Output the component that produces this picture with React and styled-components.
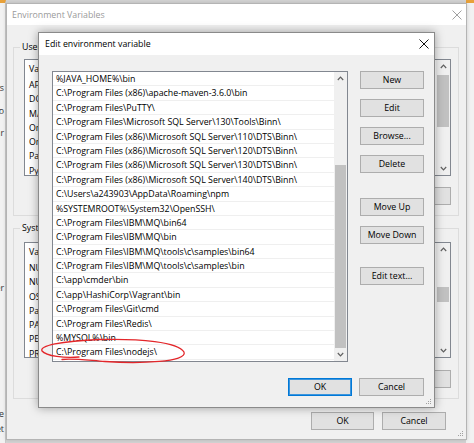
import React from 'react';
import styled, { createGlobalStyle } from 'styled-components';

const GlobalStyle = createGlobalStyle`
  html, body { margin: 0; padding: 0; }
  body {
    background: #d4d4d4;
    font-family: "Open Sans", "Noto Sans", sans-serif;
    font-size: 8.8px;
    color: #000;
  }
  * { box-sizing: border-box; }
`;

const Desktop = styled.div`
  position: relative;
  width: 474px;
  height: 443px;
  overflow: hidden;
  background: #d4d4d4;
`;

// windows sitting behind, only their edges show
const BackWindow = styled.div`
  position: absolute;
  top: 0;
  left: ${p => p.$x}px;
  width: ${p => p.$w}px;
  height: 443px;
  display: flex;
  flex-direction: column;
  align-items: flex-end;
  background: #f2f2f2;
  border-top: 3px solid #e8a13a;
  border-right: 1px solid #c9c9c9;
  color: #333;
`;

const BackLine = styled.div`
  margin-top: ${p => p.$mt}px;
  line-height: 14px;
  white-space: nowrap;
  padding-right: 1px;
`;

const Window = styled.div`
  position: absolute;
  left: ${p => p.$x}px;
  top: ${p => p.$y}px;
  width: ${p => p.$w}px;
  height: ${p => p.$h}px;
  display: flex;
  flex-direction: column;
  background: #f0f0f0;
  border: 1px solid ${p => (p.$active ? '#8a8a8a' : '#b4b4b4')};
  box-shadow: ${p => (p.$active ? '0 0 9px rgba(0,0,0,0.35)' : '0 0 4px rgba(0,0,0,0.15)')};
`;

const TitleBar = styled.div`
  flex: none;
  height: ${p => p.$h}px;
  display: flex;
  align-items: center;
  justify-content: space-between;
  padding: 0 ${p => p.$pr}px 0 ${p => p.$pl}px;
  background: #fff;
  color: ${p => (p.$active ? '#000' : '#9a9a9a')};
`;

const CloseIcon = ({ color }) => (
  <svg width="10" height="10" viewBox="0 0 10 10">
    <path d="M0.5 0.5 L9.5 9.5 M9.5 0.5 L0.5 9.5" stroke={color} strokeWidth="1" fill="none" />
  </svg>
);

const Grip = styled.svg`
  position: absolute;
  right: 2px;
  bottom: 2px;
`;

const SizeGrip = () => (
  <Grip width="6" height="6" viewBox="0 0 6 6">
    <rect x="4" y="0" width="1" height="1" fill="#a0a0a0" />
    <rect x="2" y="2" width="1" height="1" fill="#a0a0a0" />
    <rect x="4" y="2" width="1" height="1" fill="#a0a0a0" />
    <rect x="0" y="4" width="1" height="1" fill="#a0a0a0" />
    <rect x="2" y="4" width="1" height="1" fill="#a0a0a0" />
    <rect x="4" y="4" width="1" height="1" fill="#a0a0a0" />
  </Grip>
);

/* ---------- outer "Environment Variables" window ---------- */

const OuterBody = styled.div`
  flex: 1;
  display: flex;
  flex-direction: column;
  padding: 15px 7px 0 6px;
`;

const GroupBox = styled.fieldset`
  margin: ${p => p.$mt}px 0 0 0;
  padding: 0 7px 10px 10px;
  min-width: 0;
  border: 1px solid #dcdcdc;
`;

const GroupLabel = styled.legend`
  margin-left: -4px;
  padding: 0 2px;
  line-height: 14px;
`;

const ListView = styled.div`
  height: ${p => p.$h}px;
  margin-top: ${p => p.$mt}px;
  display: flex;
  background: #fff;
  border: 1px solid #828790;
`;

const ListBody = styled.div`
  flex: 1;
  min-width: 0;
  overflow: hidden;
`;

const HeaderRow = styled.div`
  display: flex;
  height: 18px;
  line-height: 18px;
`;

const HeaderCell = styled.div`
  width: ${p => p.$w}px;
  flex: none;
  padding-left: 4px;
  border-right: 1px solid #e5e5e5;
  white-space: nowrap;
  overflow: hidden;
`;

const VarRow = styled.div`
  display: flex;
  height: 14.3px;
  line-height: 14.3px;
`;

const VarCell = styled.div`
  width: ${p => p.$w}px;
  flex: none;
  padding-left: 4px;
  white-space: nowrap;
  overflow: hidden;
`;

const ButtonRow = styled.div`
  display: flex;
  justify-content: flex-end;
  gap: 8px;
  margin-top: ${p => p.$mt}px;
  margin-right: ${p => p.$mr || 0}px;
`;

const Button = styled.button`
  flex: none;
  width: ${p => p.$w || 64}px;
  height: 18px;
  margin-top: ${p => p.$mt || 0}px;
  padding: 0;
  font: inherit;
  line-height: 16px;
  color: #000;
  background: #e1e1e1;
  border: 1px solid ${p => (p.$default ? '#0078d7' : '#adadad')};
  box-shadow: ${p => (p.$default ? 'inset 0 0 0 1px #3c95dd' : 'none')};
`;

/* ---------- scrollbars ---------- */

const ScrollBar = styled.div`
  width: ${p => p.$w}px;
  flex: none;
  display: flex;
  flex-direction: column;
  background: #f0f0f0;
`;

const ScrollArrow = styled.div`
  flex: none;
  height: 13px;
  display: flex;
  align-items: center;
  justify-content: center;
`;

const ScrollRail = styled.div`
  flex: 1;
  display: flex;
  flex-direction: column;
  padding: 0 1px;
`;

const ScrollThumb = styled.div`
  margin-top: ${p => (p.$atEnd ? 'auto' : `${p.$offset}px`)};
  height: ${p => p.$size}px;
  background: #c1c1c1;
`;

const Chevron = ({ down }) => (
  <svg width="7" height="5" viewBox="0 0 7 5">
    <path
      d={down ? 'M0.8 1 L3.5 3.8 L6.2 1' : 'M0.8 4 L3.5 1.2 L6.2 4'}
      stroke="#606060"
      strokeWidth="1.2"
      fill="none"
    />
  </svg>
);

const Scroller = ({ w = 14, offset = 0, size, atEnd }) => (
  <ScrollBar $w={w}>
    <ScrollArrow><Chevron /></ScrollArrow>
    <ScrollRail>
      <ScrollThumb $offset={offset} $size={size} $atEnd={atEnd} />
    </ScrollRail>
    <ScrollArrow><Chevron down /></ScrollArrow>
  </ScrollBar>
);

const VariableList = ({ rows, h, mt, thumbOffset, thumbSize }) => (
  <ListView $h={h} $mt={mt}>
    <ListBody>
      <HeaderRow>
        <HeaderCell $w={150}>Variable</HeaderCell>
        <HeaderCell $w={270}>Value</HeaderCell>
      </HeaderRow>
      {rows.map(([name, value]) => (
        <VarRow key={name}>
          <VarCell $w={150}>{name}</VarCell>
          <VarCell $w={270}>{value}</VarCell>
        </VarRow>
      ))}
    </ListBody>
    <Scroller offset={thumbOffset} size={thumbSize} />
  </ListView>
);

/* ---------- "Edit environment variable" dialog ---------- */

const DialogBody = styled.div`
  flex: 1;
  display: flex;
  flex-direction: column;
  padding: 16px 10px 0 13px;
`;

const DialogMain = styled.div`
  display: flex;
  gap: 12px;
`;

const PathList = styled.div`
  width: 296px;
  height: 291px;
  flex: none;
  display: flex;
  background: #fff;
  border: 1px solid #828790;
`;

const PathRow = styled.div`
  height: 14.4px;
  line-height: 14px;
  padding-left: 3px;
  white-space: nowrap;
  overflow: hidden;
  border-bottom: 1px solid #efefef;
`;

const SideButtons = styled.div`
  display: flex;
  flex-direction: column;
  gap: 10px;
`;

const DialogFooter = styled.div`
  display: flex;
  justify-content: flex-end;
  gap: 7px;
  margin-top: 16px;
`;

const Annotation = styled.svg`
  position: absolute;
  left: 0;
  top: 0;
  pointer-events: none;
`;

const userVars = [
  ['APPLICATION_ENV', 'development'],
  ['DOCKER_TOOLBOX_INSTALL_PATH', 'C:\\Program Files\\Docker Toolbox'],
  ['MAVEN_HOME', 'C:\\Program Files (x86)\\apache-maven-3.6.0'],
  ['OneDrive', 'C:\\Users\\a243903\\OneDrive'],
  ['OneDriveCommercial', 'C:\\Users\\a243903\\OneDrive - Company'],
  ['Path', '%JAVA_HOME%\\bin;C:\\Program Files (x86)\\apache-maven...'],
  ['PyCharm Community Edition', 'C:\\Program Files\\JetBrains\\PyCharm\\bin;'],
];

const systemVars = [
  ['NUMBER_OF_PROCESSORS', '4'],
  ['NUGET_HOME', 'C:\\Program Files\\NuGet'],
  ['OS', 'Windows_NT'],
  ['Path', 'C:\\ProgramData\\Oracle\\Java\\javapath;C:\\Windows\\system32'],
  ['PATHEXT', '.COM;.EXE;.BAT;.CMD;.VBS;.VBE;.JS;.JSE;.WSF;.WSH;.MSC'],
  ['PERL5LIB', 'C:\\Perl\\lib'],
  ['PROCESSOR_ARCHITECTURE', 'AMD64'],
];

const paths = [
  '%JAVA_HOME%\\bin',
  'C:\\Program Files (x86)\\apache-maven-3.6.0\\bin',
  'C:\\Program Files\\PuTTY\\',
  'C:\\Program Files\\Microsoft SQL Server\\130\\Tools\\Binn\\',
  'C:\\Program Files (x86)\\Microsoft SQL Server\\110\\DTS\\Binn\\',
  'C:\\Program Files (x86)\\Microsoft SQL Server\\120\\DTS\\Binn\\',
  'C:\\Program Files (x86)\\Microsoft SQL Server\\130\\DTS\\Binn\\',
  'C:\\Program Files (x86)\\Microsoft SQL Server\\140\\DTS\\Binn\\',
  'C:\\Users\\a243903\\AppData\\Roaming\\npm',
  '%SYSTEMROOT%\\System32\\OpenSSH\\',
  'C:\\Program Files\\IBM\\MQ\\bin64',
  'C:\\Program Files\\IBM\\MQ\\bin',
  'C:\\Program Files\\IBM\\MQ\\tools\\c\\samples\\bin64',
  'C:\\Program Files\\IBM\\MQ\\tools\\c\\samples\\bin',
  'C:\\app\\cmder\\bin',
  'C:\\app\\HashiCorp\\Vagrant\\bin',
  'C:\\Program Files\\Git\\cmd',
  'C:\\Program Files\\Redis\\',
  '%MYSQL%\\bin',
  'C:\\Program Files\\nodejs\\',
];

export default function App() {
  return (
    <>
      <GlobalStyle />
      <Desktop>
        <BackWindow $x={-194} $w={200}>
          <BackLine $mt={78}>Advanced Users</BackLine>
          <BackLine $mt={9}>Info</BackLine>
          <BackLine $mt={8}>Taskbar</BackLine>
          <BackLine $mt={141}>Manager</BackLine>
          <BackLine $mt={112}>Delete</BackLine>
          <BackLine $mt={1}>Reset</BackLine>
        </BackWindow>
        <BackWindow $x={466} $w={20} />

        <Window $x={6} $y={3} $w={461} $h={437}>
          <TitleBar $h={21} $pl={5} $pr={4}>
            <span>Environment Variables</span>
            <CloseIcon color="#a0a0a0" />
          </TitleBar>
          <OuterBody>
            <GroupBox $mt={0}>
              <GroupLabel>User variables for a243903</GroupLabel>
              <VariableList rows={userVars} h={117} mt={5} thumbOffset={2} thumbSize={52} />
              <ButtonRow $mt={11}>
                <Button>New...</Button>
                <Button>Edit...</Button>
                <Button>Delete</Button>
              </ButtonRow>
            </GroupBox>
            <GroupBox $mt={5}>
              <GroupLabel>System variables</GroupLabel>
              <VariableList rows={systemVars} h={116} mt={7} thumbOffset={31} thumbSize={15} />
              <ButtonRow $mt={12}>
                <Button>New...</Button>
                <Button>Edit...</Button>
                <Button>Delete</Button>
              </ButtonRow>
            </GroupBox>
            <ButtonRow $mt={13} $mr={13}>
              <Button $w={63}>OK</Button>
              <Button>Cancel</Button>
            </ButtonRow>
          </OuterBody>
          <SizeGrip />
        </Window>

        <Window $x={38} $y={32} $w={397} $h={376} $active>
          <TitleBar $h={22} $pl={6} $pr={5} $active>
            <span>Edit environment variable</span>
            <CloseIcon color="#111" />
          </TitleBar>
          <DialogBody>
            <DialogMain>
              <PathList>
                <ListBody>
                  {paths.map(p => (
                    <PathRow key={p}>{p}</PathRow>
                  ))}
                </ListBody>
                <Scroller w={13} size={183} atEnd />
              </PathList>
              <SideButtons>
                <Button>New</Button>
                <Button>Edit</Button>
                <Button>Browse...</Button>
                <Button>Delete</Button>
                <Button $mt={15}>Move Up</Button>
                <Button>Move Down</Button>
                <Button $mt={13}>Edit text...</Button>
              </SideButtons>
            </DialogMain>
            <DialogFooter>
              <Button $default>OK</Button>
              <Button $w={65}>Cancel</Button>
            </DialogFooter>
          </DialogBody>
          <SizeGrip />
        </Window>

        <Annotation width="474" height="443" viewBox="0 0 474 443">
          <path
            d="M79 357 C65 358.5 46 356 42 351 C39 346 60 341 100 339.5 C140 338.5 178 342 184 352 C188 362 140 364 105 361.5 C90 360.5 72 358 62 359.5"
            stroke="#e3262a"
            strokeWidth="1.3"
            fill="none"
            strokeLinecap="round"
          />
        </Annotation>
      </Desktop>
    </>
  );
}
